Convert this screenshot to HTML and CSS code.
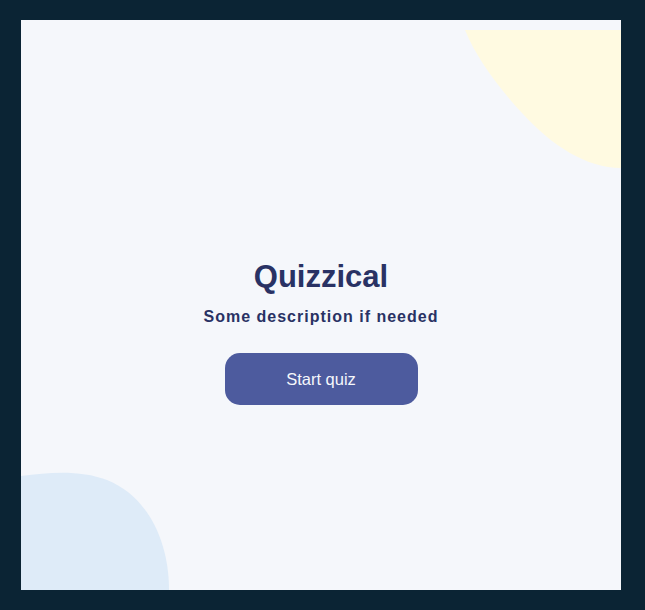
FILE: index.html
```html
<!DOCTYPE html>
<html lang="en">
<head>
<meta charset="utf-8">
<title>Quizzical</title>
<link rel="stylesheet" href="styles.css">
</head>
<body>
  <main class="card">
    <svg class="blobs" viewBox="0 0 600 570" width="600" height="570" aria-hidden="true">
      <path fill="#FFFAE1" d="M444 10 H600 V148 C566 148 531 126 501 93 C476 66 455 37 444 10 Z"/>
      <path fill="#DEEBF8" d="M0 456 C30 452 60 450 86 460 C126 476 148 520 148 570 H0 Z"/>
    </svg>
    <section class="intro">
      <h1 class="title">Quizzical</h1>
      <p class="desc">Some description if needed</p>
      <button class="start">Start quiz</button>
    </section>
  </main>
</body>
</html>
```
FILE: styles.css
```css
html, body {
  margin: 0;
  padding: 0;
}
body {
  background: #0B2434;
  width: 645px;
  height: 610px;
  padding: 20px 0 0 21px;
  box-sizing: border-box;
  font-family: "Liberation Sans", Arial, sans-serif;
  overflow: hidden;
}
.card {
  position: relative;
  width: 600px;
  height: 570px;
  background: #F5F7FB;
  overflow: hidden;
}
.blobs {
  position: absolute;
  left: 0;
  top: 0;
}
.intro {
  position: relative;
  display: flex;
  flex-direction: column;
  align-items: center;
  padding-top: 239px;
  color: #293264;
}
.title {
  margin: 0;
  font-size: 31px;
  font-weight: 700;
  line-height: normal;
}
.desc {
  margin: 13px 0 0;
  font-size: 16px;
  font-weight: 700;
  letter-spacing: 1px;
  line-height: normal;
}
.start {
  margin-top: 27px;
  width: 193px;
  height: 52px;
  border: none;
  border-radius: 15px;
  background: #4D5B9E;
  color: #F5F7FB;
  font-family: "Liberation Sans", Arial, sans-serif;
  font-size: 16.5px;
  cursor: pointer;
}
```
